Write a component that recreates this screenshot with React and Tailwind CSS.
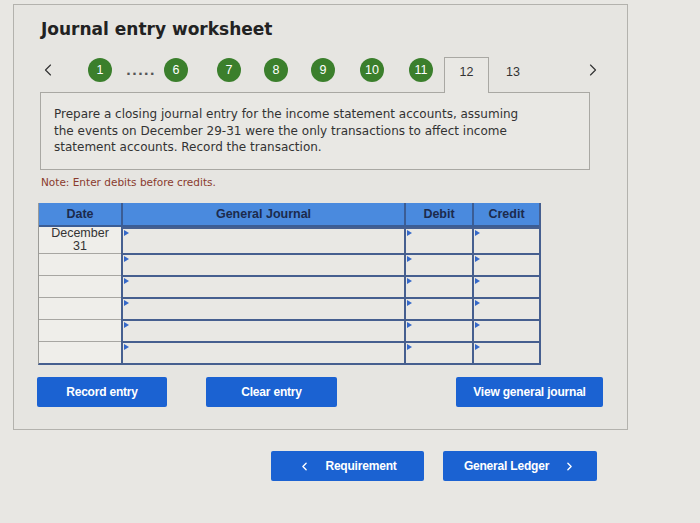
import { ChevronLeft, ChevronRight } from "lucide-react";

const steps = ["6", "7", "8", "9", "10", "11"];
const rows = [0, 1, 2, 3, 4, 5];

function Step({ n, className = "" }) {
  return (
    <div
      className={`w-[24px] h-[24px] rounded-full bg-[#3b7f2c] text-white text-[12.5px] flex items-center justify-center font-['Liberation_Sans',sans-serif] ${className}`}
    >
      {n}
    </div>
  );
}

function InputCell({ w }) {
  return (
    <div className={`relative ${w} border-l-2 border-t-2 border-[#465f8f] bg-[#e9e8e4]`}>
      <span className="absolute top-[1px] left-[1px] w-0 h-0 border-l-[5px] border-l-[#3568c8] border-y-[3px] border-y-transparent" />
    </div>
  );
}

export default function App() {
  return (
    <div className="min-h-screen w-[700px] h-[523px] bg-[#e8e7e3] pl-[13px] pt-[4px] font-['DejaVu_Sans',sans-serif] overflow-hidden">
      {/* worksheet panel */}
      <div className="w-[615px] h-[426px] border border-[#b3b2ad] bg-[#e6e5e1]">
        <h1 className="ml-[27px] mt-[12px] h-[24px] text-[17px] leading-[24px] font-bold text-[#222]">
          Journal entry worksheet
        </h1>

        {/* step navigation */}
        <div className="mt-[15px] h-[36px] flex items-end">
          <div className="ml-[24px] w-[20px] h-[24px] mb-[10px] flex items-center justify-center text-[#333]">
            <ChevronLeft size={22} strokeWidth={1.4} />
          </div>
          <div className="flex items-center mb-[10px]">
            <Step n="1" className="ml-[30px]" />
            <span className="ml-[14px] w-[30px] text-[13px] font-bold text-[#555] tracking-[1px] leading-none">
              .....
            </span>
            <Step n={steps[0]} className="ml-[8px]" />
            <Step n={steps[1]} className="ml-[29px]" />
            <Step n={steps[2]} className="ml-[23px]" />
            <Step n={steps[3]} className="ml-[23px]" />
            <Step n={steps[4]} className="ml-[25px]" />
            <Step n={steps[5]} className="ml-[25px]" />
          </div>
          <div className="relative z-10 ml-[11px] w-[45px] h-[36px] -mb-px border border-b-0 border-[#a9a8a3] bg-[#e9e8e4] flex items-start justify-center pt-[5px] text-[12.5px] text-[#333] font-['Liberation_Sans',sans-serif]">
            12
          </div>
          <div className="w-[48px] h-[24px] mb-[8px] flex items-center justify-center text-[12.5px] text-[#333] font-['Liberation_Sans',sans-serif]">
            13
          </div>
          <div className="ml-[46px] w-[20px] h-[24px] mb-[10px] flex items-center justify-center text-[#333]">
            <ChevronRight size={22} strokeWidth={1.4} />
          </div>
        </div>

        {/* prompt */}
        <div className="ml-[26px] w-[550px] h-[78px] border border-[#a9a8a3] bg-[#e9e8e4] pl-[13px] pt-[13px] text-[12px] leading-[16.5px] text-[#333]">
          <p>
            Prepare a closing journal entry for the income statement accounts, assuming
            <br />
            the events on December 29-31 were the only transactions to affect income
            <br />
            statement accounts. Record the transaction.
          </p>
        </div>

        <p className="ml-[27px] mt-[5px] h-[14px] text-[10.5px] leading-[14px] text-[#8a3b2e]">
          Note: Enter debits before credits.
        </p>

        {/* journal table */}
        <div className="ml-[24px] mt-[14px] w-[503px] border-r-2 border-b-2 border-[#465f8f] border-l border-l-[#9c9b97] bg-[#e9e8e4] font-['Liberation_Sans',sans-serif]">
          <div className="flex h-[24px] bg-[#4a8ade] text-[12.5px] font-bold text-[#1c2b4d] border-b-2 border-[#3b5d95]">
            <div className="w-[82px] flex items-center justify-center">Date</div>
            <div className="w-[283px] flex items-center justify-center border-l-2 border-[#3b5d95]">General Journal</div>
            <div className="w-[68px] flex items-center justify-center border-l-2 border-[#3b5d95]">Debit</div>
            <div className="flex-1 flex items-center justify-center border-l-2 border-[#3b5d95]">Credit</div>
          </div>
          {rows.map((r) => (
            <div key={r} className={`flex ${r === 0 ? "h-[26px]" : "h-[22px]"}`}>
              <div
                className={`w-[82px] bg-[#efeeea] text-[12.5px] leading-[13px] text-[#333] text-center ${
                  r === 0 ? "" : "border-t border-[#a7a6a2]"
                }`}
              >
                {r === 0 && (
                  <>
                    December
                    <br />
                    31
                  </>
                )}
              </div>
              <InputCell w="w-[283px]" />
              <InputCell w="w-[68px]" />
              <InputCell w="flex-1" />
            </div>
          ))}
        </div>

        {/* actions */}
        <div className="mt-[12px] flex text-[12px] font-bold text-white font-['Liberation_Sans',sans-serif] tracking-[-0.2px]">
          <button className="ml-[23px] w-[130px] h-[30px] bg-[#1b62d2] rounded-[2px]">Record entry</button>
          <button className="ml-[39px] w-[131px] h-[30px] bg-[#1b62d2] rounded-[2px]">Clear entry</button>
          <button className="ml-[119px] w-[147px] h-[30px] bg-[#1b62d2] rounded-[2px]">View general journal</button>
        </div>
      </div>

      {/* page navigation */}
      <div className="mt-[21px] flex text-[12px] font-bold text-white font-['Liberation_Sans',sans-serif] tracking-[-0.2px]">
        <button className="ml-[258px] w-[153px] h-[30px] bg-[#1b62d2] rounded-[2px] flex items-center justify-center gap-[14px]">
          <ChevronLeft size={13} strokeWidth={2.5} />
          Requirement
        </button>
        <button className="ml-[19px] w-[154px] h-[30px] bg-[#1b62d2] rounded-[2px] flex items-center justify-center gap-[14px]">
          General Ledger
          <ChevronRight size={13} strokeWidth={2.5} />
        </button>
      </div>
    </div>
  );
}
